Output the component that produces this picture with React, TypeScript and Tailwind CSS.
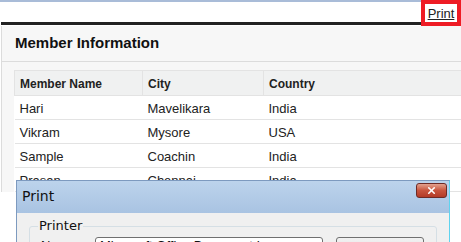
import { X } from 'lucide-react'

const members = [
  { name: 'Hari', city: 'Mavelikara', country: 'India' },
  { name: 'Vikram', city: 'Mysore', country: 'USA' },
  { name: 'Sample', city: 'Coachin', country: 'India' },
  { name: 'Prasan', city: 'Chennai', country: 'India' },
]

export default function App() {
  return (
    <div className="relative h-[242px] w-[461px] overflow-hidden bg-white font-['Liberation_Sans',Arial,sans-serif] text-[#222]">
      <div className="flex h-[26px]">
        <div className="flex-1 flex flex-col justify-between pb-[1px]">
          <div className="h-[2px] bg-[#a9bcd8]" />
          <div className="ml-[1px] h-[3px] bg-[#222]" />
        </div>
        <div className="w-[40px] h-[26px] border-[4px] border-[#ee1c25] bg-white flex items-start justify-center">
          <a href="#" className="mt-[3px] text-[13px] leading-[14px] text-[#222] underline">Print</a>
        </div>
      </div>

      <div className="ml-[1px] border-l border-[#dcdcdc] bg-[#f7f7f7]">
        <div className="h-[36px] px-[13px] flex items-center border-b border-[#dcdcdc]">
          <h3 className="text-[15px] font-bold text-[#111]">Member Information</h3>
        </div>
        <div className="pt-[8px] pl-[12px]">
          <table className="w-[470px] border-collapse bg-white text-[13px]">
            <thead>
              <tr className="h-[25px] bg-[#f0f1f1]">
                <th className="w-[128px] border border-[#e3e3e3] pl-[5px] pt-[1px] text-left text-[12px] font-bold">Member Name</th>
                <th className="w-[121px] border border-[#e3e3e3] pl-[5px] pt-[1px] text-left text-[12px] font-bold">City</th>
                <th className="border border-[#e3e3e3] pl-[5px] pt-[1px] text-left text-[12px] font-bold">Country</th>
              </tr>
            </thead>
            <tbody>
              {members.map((m) => (
                <tr key={m.name} className="h-[24px]">
                  <td className="border-b border-[#e3e3e3] pl-[5px] pt-[2px]">{m.name}</td>
                  <td className="border-b border-[#e3e3e3] pl-[5px] pt-[2px]">{m.city}</td>
                  <td className="border-b border-[#e3e3e3] pl-[5px] pt-[2px]">{m.country}</td>
                </tr>
              ))}
            </tbody>
          </table>
        </div>
      </div>

      <div className="absolute left-[16px] top-[180px] w-[434px] h-[80px] border border-[#7d9abf] border-r-[#5fd3ef] bg-[#f0f0f0] font-['DejaVu_Sans',sans-serif]">
        <div className="h-[32px] bg-gradient-to-b from-[#bcd3ec] to-[#a9c3e2] flex items-start justify-between">
          <span className="ml-[5px] mt-[5px] text-[14px] text-[#111]">Print</span>
          <div className="mt-[2px] mr-[2px] w-[31px] h-[15px] rounded-[3px] border border-[#6e2a25] bg-gradient-to-b from-[#e2a18f] via-[#c8543d] to-[#b33a26] flex items-center justify-center">
            <X className="h-[11px] w-[11px] text-white" strokeWidth={3.5} />
          </div>
        </div>
        <div className="relative mx-[12px] mt-[13px] h-[60px] rounded-[3px] border border-[#d5dfe5] bg-[#f0f0f0]">
          <span className="absolute left-[8px] top-[-9px] bg-[#f0f0f0] px-[1px] text-[13px] leading-[16px] text-[#111]">Printer</span>
          <div className="mt-[10px] flex items-start font-['Liberation_Sans',Arial,sans-serif]">
            <span className="ml-[11px] w-[54px] text-[13px] leading-[16px] text-[#111] mt-[1px]">Name:</span>
            <div className="w-[228px] h-[22px] rounded-[3px] border border-[#707070] bg-white px-[4px] flex items-start justify-between text-[13px] leading-[15px] text-[#111]">
              <span>Microsoft Office Document Image Writer</span>
              <span className="text-[8px]">▼</span>
            </div>
            <div className="ml-[13px] w-[88px] h-[22px] rounded-[3px] border border-[#707070] bg-gradient-to-b from-[#f2f2f2] to-[#dcdcdc] text-center text-[13px] leading-[17px] text-[#111]">Properties</div>
          </div>
        </div>
      </div>
    </div>
  )
}
